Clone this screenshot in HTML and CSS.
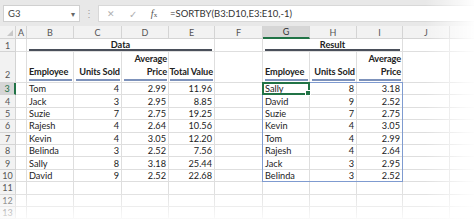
FILE: index.html
```html
<!DOCTYPE html>
<html lang="en">
<head>
    <meta charset="UTF-8">
    <title>SORTBY</title>
    <link rel="stylesheet" href="styles.css">
</head>
<body>
    <div class="formula-bar">
        <div class="name-box"><span>G3</span><span class="drop">&#9662;</span></div>
        <div class="grip">&#8942;</div>
        <div class="formula-box">
            <span class="fb-icon cancel">&#10005;</span>
            <span class="fb-icon ok">&#10003;</span>
            <span class="fb-icon fx"><i>f</i><small>x</small></span>
            <span class="formula">=SORTBY(B3:D10,E3:E10,-1)</span>
        </div>
    </div>

    <div class="sheet">
        <!-- column headers -->
        <div class="hd corner"><span class="tri"></span></div>
        <div class="hd">A</div><div class="hd">B</div><div class="hd">C</div><div class="hd">D</div>
        <div class="hd">E</div><div class="hd">F</div><div class="hd active-col">G</div><div class="hd">H</div>
        <div class="hd">I</div><div class="hd">J</div><div class="hd"></div>

        <!-- row 1 -->
        <div class="rh">1</div><div class="c"></div>
        <div class="c title span4"><span>Data</span></div>
        <div class="c"></div>
        <div class="c title span3"><span>Result</span></div>
        <div class="c"></div><div class="c"></div>

        <!-- row 2 -->
        <div class="rh bottom">2</div><div class="c"></div>
        <div class="c head"><span>Employee</span></div>
        <div class="c head r"><span>Units Sold</span></div>
        <div class="c head r"><span>Average<br>Price</span></div>
        <div class="c head r"><span>Total Value</span></div>
        <div class="c"></div>
        <div class="c head"><span>Employee</span></div>
        <div class="c head r"><span>Units Sold</span></div>
        <div class="c head r"><span>Average<br>Price</span></div>
        <div class="c"></div><div class="c"></div>

        <div class="rh active-row">3</div><div class="c"></div>
        <div class="c">Tom</div><div class="c r">4</div><div class="c r">2.99</div><div class="c r">11.96</div><div class="c"></div>
        <div class="c">Sally</div><div class="c r">8</div><div class="c r">3.18</div><div class="c"></div><div class="c"></div>

        <div class="rh">4</div><div class="c"></div>
        <div class="c">Jack</div><div class="c r">3</div><div class="c r">2.95</div><div class="c r">8.85</div><div class="c"></div>
        <div class="c">David</div><div class="c r">9</div><div class="c r">2.52</div><div class="c"></div><div class="c"></div>

        <div class="rh">5</div><div class="c"></div>
        <div class="c">Suzie</div><div class="c r">7</div><div class="c r">2.75</div><div class="c r">19.25</div><div class="c"></div>
        <div class="c">Suzie</div><div class="c r">7</div><div class="c r">2.75</div><div class="c"></div><div class="c"></div>

        <div class="rh">6</div><div class="c"></div>
        <div class="c">Rajesh</div><div class="c r">4</div><div class="c r">2.64</div><div class="c r">10.56</div><div class="c"></div>
        <div class="c">Kevin</div><div class="c r">4</div><div class="c r">3.05</div><div class="c"></div><div class="c"></div>

        <div class="rh">7</div><div class="c"></div>
        <div class="c">Kevin</div><div class="c r">4</div><div class="c r">3.05</div><div class="c r">12.20</div><div class="c"></div>
        <div class="c">Tom</div><div class="c r">4</div><div class="c r">2.99</div><div class="c"></div><div class="c"></div>

        <div class="rh">8</div><div class="c"></div>
        <div class="c">Belinda</div><div class="c r">3</div><div class="c r">2.52</div><div class="c r">7.56</div><div class="c"></div>
        <div class="c">Rajesh</div><div class="c r">4</div><div class="c r">2.64</div><div class="c"></div><div class="c"></div>

        <div class="rh">9</div><div class="c"></div>
        <div class="c">Sally</div><div class="c r">8</div><div class="c r">3.18</div><div class="c r">25.44</div><div class="c"></div>
        <div class="c">Jack</div><div class="c r">3</div><div class="c r">2.95</div><div class="c"></div><div class="c"></div>

        <div class="rh">10</div><div class="c"></div>
        <div class="c">David</div><div class="c r">9</div><div class="c r">2.52</div><div class="c r">22.68</div><div class="c"></div>
        <div class="c">Belinda</div><div class="c r">3</div><div class="c r">2.52</div><div class="c"></div><div class="c"></div>

        <div class="rh">11</div><div class="c"></div><div class="c"></div><div class="c"></div><div class="c"></div><div class="c"></div>
        <div class="c"></div><div class="c"></div><div class="c"></div><div class="c"></div><div class="c"></div><div class="c"></div>

        <div class="rh">12</div><div class="c"></div><div class="c"></div><div class="c"></div><div class="c"></div><div class="c"></div>
        <div class="c"></div><div class="c"></div><div class="c"></div><div class="c"></div><div class="c"></div><div class="c"></div>

        <div class="rh">13</div><div class="c"></div><div class="c"></div><div class="c"></div><div class="c"></div><div class="c"></div>
        <div class="c"></div><div class="c"></div><div class="c"></div><div class="c"></div><div class="c"></div><div class="c"></div>

        <div class="spill"></div>
        <div class="selected"><span class="handle"></span></div>
    </div>

    <div class="fade"></div>
</body>
</html>
```

FILE: styles.css
```css
body {
    margin: 0;
    width: 474px;
    height: 222px;
    overflow: hidden;
    position: relative;
    background: #ffffff;
    font-family: Lato, "Open Sans", sans-serif;
    color: #222222;
}
.formula-bar {
    height: 26px;
    background-color: #e8e8e8;
    display: flex;
    align-items: flex-start;
    padding-top: 5px;
    box-sizing: border-box;
}
.name-box {
    margin-left: 3px;
    width: 77px;
    height: 17px;
    background: #ffffff;
    border: 1px solid #d0d0d0;
    box-sizing: border-box;
    display: flex;
    align-items: center;
    justify-content: space-between;
    padding: 0 4px;
    font-size: 9.5px;
    color: #444444;
}
.name-box .drop {
    font-size: 8px;
    color: #666666;
}
.grip {
    width: 18px;
    text-align: center;
    font-size: 10px;
    line-height: 17px;
    color: #a0a0a0;
}
.formula-box {
    flex: 1;
    height: 17px;
    background: #ffffff;
    border: 1px solid #d8d8d8;
    border-right: none;
    box-sizing: border-box;
    display: flex;
    align-items: center;
    font-size: 9.5px;
}
.fb-icon {
    color: #b0b0b0;
    text-align: center;
}
.cancel {
    width: 10px;
    margin-left: 7px;
    font-size: 9px;
}
.ok {
    width: 12px;
    margin-left: 11px;
    font-size: 10px;
}
.fx {
    width: 12px;
    margin-left: 9px;
    color: #555555;
    font-family: "Liberation Serif", serif;
    font-size: 10px;
}
.fx small {
    font-size: 7px;
}
.formula {
    margin-left: 10px;
    color: #333333;
}

.sheet {
    position: relative;
    display: grid;
    grid-template-columns: 16px 11px 47px 48px 47px 46px 48px 47px 47px 46px 47px 47px;
    grid-template-rows: 13px 13px 31px repeat(11, 12.4px);
    font-size: 9.2px;
}
.hd {
    background-color: #f2f2f2;
    border-right: 1px solid #d4d4d4;
    border-bottom: 1px solid #d4d4d4;
    color: #555555;
    font-size: 9px;
    display: flex;
    align-items: center;
    justify-content: center;
}
.corner {
    position: relative;
}
.tri {
    position: absolute;
    right: 2px;
    bottom: 2px;
    width: 0;
    height: 0;
    border-left: 6px solid transparent;
    border-bottom: 6px solid #c8c8c8;
}
.active-col {
    background-color: #d6d6d6;
    border-bottom: 2px solid #217346;
    color: #333333;
}
.rh {
    background-color: #f2f2f2;
    border-right: 1px solid #d4d4d4;
    border-bottom: 1px solid #d4d4d4;
    color: #555555;
    font-size: 9px;
    display: flex;
    align-items: center;
    justify-content: center;
}
.rh.bottom {
    align-items: flex-end;
    padding-bottom: 2px;
}
.active-row {
    background-color: #d6d6d6;
    border-right: 2px solid #217346;
    color: #217346;
}
.c {
    border-right: 1px solid #dedede;
    border-bottom: 1px solid #dedede;
    padding: 0 2px;
    display: flex;
    align-items: center;
    white-space: nowrap;
}
.r {
    justify-content: flex-end;
}
.title {
    font-weight: bold;
    justify-content: center;
    position: relative;
}
.title span {
    position: absolute;
    left: 2px;
    right: 2px;
    bottom: 0;
    top: 0;
    display: flex;
    align-items: center;
    justify-content: center;
    border-bottom: 2px solid #4a4f5a;
}
.span4 {
    grid-column: span 4;
}
.span3 {
    grid-column: span 3;
}
.head {
    font-weight: bold;
    align-items: stretch;
    padding: 0 1px 1px 2px;
    letter-spacing: -0.1px;
}
.head span {
    flex: 1;
    display: flex;
    align-items: flex-end;
    border-bottom: 2px solid #7d92bb;
    line-height: 13px;
    padding-bottom: 1px;
}
.head.r span {
    justify-content: flex-end;
    text-align: right;
}
.spill {
    position: absolute;
    grid-row: 4 / 12;
    grid-column: 8 / 11;
    inset: 0;
    border: 1px solid #7f9bd0;
    margin: -1px 0 0 -1px;
    pointer-events: none;
}
.selected {
    position: absolute;
    grid-row: 4 / 5;
    grid-column: 8 / 9;
    inset: 0;
    margin: -1px 0 0 -1px;
    border: 2px solid #217346;
}
.handle {
    position: absolute;
    right: -3px;
    bottom: -3px;
    width: 4px;
    height: 4px;
    background: #217346;
    border: 1px solid #ffffff;
}
.fade {
    position: absolute;
    inset: 0;
    pointer-events: none;
    background:
        linear-gradient(to right, rgba(255, 255, 255, 0) 425px, rgba(255, 255, 255, 0.95) 474px),
        linear-gradient(to bottom, rgba(255, 255, 255, 0) 190px, rgba(255, 255, 255, 0.9) 222px);
}
```
